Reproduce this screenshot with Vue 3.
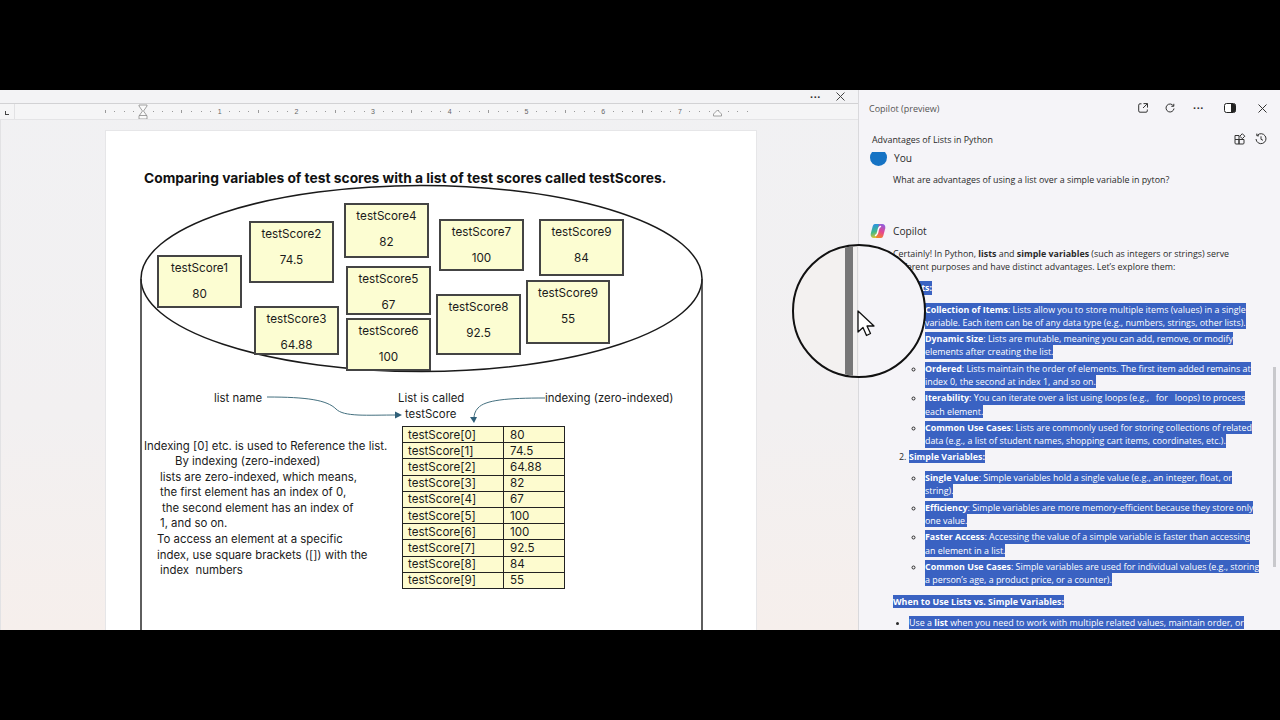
<template>
  <div class="screen">
    <div class="letterbox"></div>
    <main class="window">
      <section class="word">
        <div class="word-top">
          <span class="dots">···</span>
          <svg class="word-close" width="9" height="9" viewBox="0 0 9 9"><path d="M.5.5l8 8M8.500.5l-8 8" stroke="#444" fill="none"/></svg>
        </div>
        <div class="ruler">
          <div class="ruler-corner"><span class="tab-stop"></span></div>
          <svg class="ruler-svg" width="843" height="15" viewBox="0 0 843 15">
            <rect v-for="t in rulerTicks" :key="t.x" :x="t.x" :y="t.y" width="1" :height="t.h" fill="#9a9a9a"/>
            <text v-for="n in rulerNums" :key="n.label" :x="n.x" y="10" class="ruler-num">{{ n.label }}</text>
            <path d="M124 1h8v1l-3.500 5 3.500 5v3h-8v-3l3.500-5-3.500-5z" fill="#fafafa" stroke="#8a8a8a" stroke-width=".8"/>
            <path d="M124 11.500h8" stroke="#8a8a8a" stroke-width=".8"/>
            <path d="M698.500 12v-2l4-4 4 4v2z" fill="#fafafa" stroke="#8a8a8a" stroke-width=".8"/>
          </svg>
        </div>
        <div class="canvas">
          <div class="page">
            <h1 class="doc-title">Comparing variables of test scores with a list of test scores called testScores.</h1>

            <svg class="drum" width="650" height="499" viewBox="0 0 650 499">
              <ellipse cx="315.500" cy="147.500" rx="280.500" ry="93" fill="#fff" stroke="#1a1a1a" stroke-width="1.500"/>
              <path d="M35 148v351M596 148v351" stroke="#2a2a2a" stroke-width="1.500" fill="none"/>
              <path d="M161 266c40 0 60 3 69 12 8 8 30 6 62 6" stroke="#44707f" fill="none"/>
              <path d="M289 280.500l7 3.500-7 3.500z" fill="#2f5f78"/>
              <path d="M439 267c-38 0-60 2-67 10-3 3-4 7-4 10" stroke="#44707f" fill="none"/>
              <path d="M368 292l-4-6h7z" fill="#2f5f78"/>
            </svg>

            <div v-for="b in boxes" :key="b.name + b.value" class="score-box" :style="boxStyle(b)">
              <span>{{ b.name }}</span>
              <span>{{ b.value }}</span>
            </div>

            <span v-for="l in labels" :key="l.text" class="label" :style="{ left: l.x + 'px', top: l.y + 'px' }">{{ l.text }}</span>

            <div class="notes">
              <div v-for="n in notes" :key="n.text" class="note" :style="{ paddingLeft: n.x + 'px' }">{{ n.text }}</div>
            </div>

            <table class="scores">
              <tbody>
                <tr v-for="(v, i) in scores" :key="i">
                  <td class="key">testScore[{{ i }}]</td>
                  <td>{{ v }}</td>
                </tr>
              </tbody>
            </table>
          </div>
        </div>
      </section>

      <aside class="copilot">
        <header class="pane-head">
          <span class="pane-name">Copilot (preview)</span>
          <div class="pane-tools">
            <svg width="10" height="10" viewBox="0 0 10 10" fill="none" stroke="#333"><path d="M3.500.8H2A1.300 1.300 0 0 0 .7 2.100v5.800A1.300 1.300 0 0 0 2 9.200h6a1.300 1.300 0 0 0 1.300-1.300V6.500M5.500.6h4v4M9.300.8L5 5"/></svg>
            <svg class="t-refresh" width="10" height="10" viewBox="0 0 10 10" fill="none" stroke="#333"><path d="M8.500 3A4 4 0 1 0 9 5.500M8.800.8v2.500H6.300"/></svg>
            <span class="more t-more">···</span>
            <svg class="t-side" width="12" height="10" viewBox="0 0 12 10"><rect x=".5" y=".5" width="11" height="9" rx="2" fill="#fff" stroke="#222"/><path d="M7 1h3a1.500 1.500 0 0 1 1.500 1.500v5A1.500 1.500 0 0 1 10 9H7z" fill="#222"/></svg>
            <svg class="t-close" width="9" height="9" viewBox="0 0 9 9" fill="none" stroke="#333"><path d="M.5.5l8 8M8.500.5l-8 8"/></svg>
          </div>
        </header>
        <div class="topic">
          <span>Advantages of Lists in Python</span>
          <div class="topic-tools">
            <svg width="12" height="12" viewBox="0 0 12 12" fill="none" stroke="#333"><path d="M1 2.500h4v4H1zM1 6.500h4v4.500H2a1 1 0 0 1-1-1zM5 6.500h5V10a1 1 0 0 1-1 1H5z"/><path d="M8.300.7l2.500 2.500-2.500 2.500-2.500-2.500z"/></svg>
            <svg width="12" height="12" viewBox="0 0 12 12" fill="none" stroke="#333"><path d="M2.300 2.300A5 5 0 1 1 1 6M1.800.6v2.200H4M6 3.300v3l2 1"/></svg>
          </div>
        </div>
        <div class="thread">
          <div class="who you"><span class="avatar"></span><span>You</span></div>
          <p class="question">What are advantages of using a list over a simple variable in pyton?</p>
          <div class="who bot">
            <svg width="16" height="16" viewBox="0 0 16 16">
              <defs>
                <linearGradient id="cpA" x1="0.300" y1="0" x2="0.500" y2="1"><stop offset="0" stop-color="#2a8fe8"/><stop offset=".55" stop-color="#3fb98a"/><stop offset="1" stop-color="#e8c52e"/></linearGradient>
                <linearGradient id="cpB" x1="0.700" y1="0" x2="0.400" y2="1"><stop offset="0" stop-color="#8d5fe0"/><stop offset=".55" stop-color="#e6468f"/><stop offset="1" stop-color="#f4822c"/></linearGradient>
              </defs>
              <path d="M5 1h5L7 15H4C1.500 15 .2 13 .8 10.500L2.500 4C3 2.300 3.700 1 5 1z" fill="url(#cpA)"/>
              <path d="M11 15H6L9 1h3c2.500 0 3.800 2 3.200 4.500L13.500 12c-.5 1.700-1.200 3-2.500 3z" fill="url(#cpB)"/>
              <path d="M10.500 3.500C8.500 4 8.300 6.500 8 8c-.3 1.500-.6 3.800-2.500 4.500" stroke="#fff" stroke-width="1.400" fill="none" stroke-linecap="round"/>
            </svg>
            <span>Copilot</span>
          </div>
          <p class="intro">Certainly! In Python, <b>lists</b> and <b>simple variables</b> (such as integers or strings) serve<br>different purposes and have distinct advantages. Let’s explore them:</p>

          <div class="heading-sel first"><span class="num">1.</span><span class="sel"><b>Lists:</b></span></div>
          <ul class="sub">
            <li v-for="item in listItems" :key="item.lead">
              <div class="sel line"><b>{{ item.lead }}</b>{{ item.lines[0] }}</div>
              <div class="sel line">{{ item.lines[1] }}</div>
            </li>
          </ul>
          <div class="heading-sel second"><span class="num">2.</span><span class="sel"><b>Simple Variables:</b></span></div>
          <ul class="sub">
            <li v-for="item in varItems" :key="item.lead">
              <div class="sel line"><b>{{ item.lead }}</b>{{ item.lines[0] }}</div>
              <div class="sel line">{{ item.lines[1] }}</div>
            </li>
          </ul>
          <div class="when"><span class="sel"><b>When to Use Lists vs. Simple Variables:</b></span></div>
          <ul class="use">
            <li><span class="sel">Use a <b>list</b> when you need to work with multiple related values, maintain order, or</span></li>
          </ul>
        </div>
        <div class="scrollbar"></div>
      </aside>

      <div class="lens">
        <span class="lens-bar"></span>
        <span class="lens-edge"></span>
        <svg class="cursor" width="20" height="28" viewBox="0 0 20 28"><path d="M1 1l0 21 5-4.500 3.500 8 4-2-3.500-7.500h7z" fill="#fff" stroke="#111" stroke-width="1.300" stroke-linejoin="round"/></svg>
      </div>
    </main>
    <div class="letterbox"></div>
  </div>
</template>

<script setup>
// ruler: 76.7px per inch, zero sits at x=128 in the svg
const inch = 76.7
const rulerTicks = []
for (let i = -4; i <= 63; i++) {
  if (i % 8 === 0) continue
  const half = i % 4 === 0
  rulerTicks.push({ x: Math.round(128 + (i * inch) / 8), y: half ? 6 : 7, h: half ? 3 : 1 })
}
const rulerNums = [1, 2, 3, 4, 5, 6, 7].map((n) => ({ label: n, x: 126 + n * inch }))

const boxes = [
  { name: 'testScore1', value: 80, x: 157, y: 255, w: 85, h: 53 },
  { name: 'testScore2', value: 74.5, x: 249, y: 221, w: 85, h: 62 },
  { name: 'testScore3', value: 64.88, x: 254, y: 306, w: 85, h: 49 },
  { name: 'testScore4', value: 82, x: 344, y: 203, w: 85, h: 55 },
  { name: 'testScore5', value: 67, x: 346, y: 266, w: 85, h: 49 },
  { name: 'testScore6', value: 100, x: 346, y: 318, w: 85, h: 53 },
  { name: 'testScore7', value: 100, x: 439, y: 219, w: 85, h: 52 },
  { name: 'testScore9', value: 84, x: 539, y: 219, w: 85, h: 57 },
  { name: 'testScore8', value: 92.5, x: 436, y: 294, w: 85, h: 61 },
  { name: 'testScore9', value: 55, x: 526, y: 280, w: 84, h: 64 },
]
const boxStyle = (b) => ({
  left: b.x - 106 + 'px',
  top: b.y - 131 + 'px',
  width: b.w + 'px',
  height: b.h + 'px',
})

const labels = [
  { text: 'list name', x: 108, y: 259 },
  { text: 'List is called', x: 292, y: 259 },
  { text: 'testScore', x: 299, y: 275 },
  { text: 'indexing (zero-indexed)', x: 439, y: 259 },
]

const notes = [
  { text: 'Indexing [0] etc. is used to Reference the list.', x: 0 },
  { text: 'By indexing (zero-indexed)', x: 31 },
  { text: 'lists are zero-indexed, which means,', x: 16 },
  { text: 'the first element has an index of 0,', x: 16 },
  { text: 'the second element has an index of', x: 18 },
  { text: '1, and so on.', x: 16 },
  { text: 'To access an element at a specific', x: 13 },
  { text: 'index, use square brackets ([]) with the', x: 13 },
  { text: 'index  numbers', x: 16 },
]

const scores = [80, 74.5, 64.88, 82, 67, 100, 100, 92.5, 84, 55]

const listItems = [
  { lead: 'Collection of Items', lines: [': Lists allow you to store multiple items (values) in a single', 'variable. Each item can be of any data type (e.g., numbers, strings, other lists).'] },
  { lead: 'Dynamic Size', lines: [': Lists are mutable, meaning you can add, remove, or modify', 'elements after creating the list.'] },
  { lead: 'Ordered', lines: [': Lists maintain the order of elements. The first item added remains at', 'index 0, the second at index 1, and so on.'] },
  { lead: 'Iterability', lines: [': You can iterate over a list using loops (e.g.,   for   loops) to process', 'each element.'] },
  { lead: 'Common Use Cases', lines: [': Lists are commonly used for storing collections of related', 'data (e.g., a list of student names, shopping cart items, coordinates, etc.).'] },
]
const varItems = [
  { lead: 'Single Value', lines: [': Simple variables hold a single value (e.g., an integer, float, or', 'string).'] },
  { lead: 'Efficiency', lines: [': Simple variables are more memory-efficient because they store only', 'one value.'] },
  { lead: 'Faster Access', lines: [': Accessing the value of a simple variable is faster than accessing', 'an element in a list.'] },
  { lead: 'Common Use Cases', lines: [': Simple variables are used for individual values (e.g., storing', 'a person’s age, a product price, or a counter).'] },
]
</script>

<style>
html, body { margin: 0; background: #000; }
</style>

<style scoped>
.screen {
  width: 1280px;
  height: 720px;
  background: #000;
  display: flex;
  flex-direction: column;
  overflow: hidden;
}
.letterbox { height: 90px; flex: none; background: #000; }
.window {
  position: relative;
  height: 540px;
  flex: none;
  display: flex;
  overflow: hidden;
}

/* word side */
.word {
  width: 859px;
  flex: none;
  display: flex;
  flex-direction: column;
  background: linear-gradient(180deg, #f1f1f3 0%, #f2f0f1 60%, #f6efec 100%);
  border-right: 1px solid #d9d9dc;
  box-sizing: border-box;
}
.word-top {
  height: 14px;
  flex: none;
  box-sizing: border-box;
  background: #f3f3f5;
  border-bottom: 1px solid #d2d2d4;
  display: flex;
  align-items: center;
  justify-content: flex-end;
  gap: 15px;
  padding-right: 13px;
}
.dots { font: bold 11px "Liberation Sans", sans-serif; color: #333; }
.ruler {
  height: 16px;
  flex: none;
  box-sizing: border-box;
  display: flex;
  background: #f5f5f6;
  border-bottom: 1px solid #e4e4e6;
}
.ruler-corner {
  width: 15px;
  flex: none;
  border-right: 1px solid #e2e2e4;
  position: relative;
  box-sizing: border-box;
}
.tab-stop {
  position: absolute;
  left: 5px;
  top: 7px;
  width: 3px;
  height: 3px;
  border-left: 1px solid #444;
  border-bottom: 1px solid #444;
}
.ruler-num { font: 7px "Liberation Sans", sans-serif; fill: #666; }
.canvas {
  flex: 1;
  min-height: 0;
  overflow: hidden;
  padding: 11px 0 0 106px;
  box-shadow: inset 15px 0 0 -14px #e2e2e4;
}
.page {
  position: relative;
  width: 650px;
  height: 600px;
  background: #fff;
  box-shadow: 0 0 0 1px #e6e6e8;
  font-family: Inter, "Liberation Sans", sans-serif;
  color: #1b1b1b;
}
.doc-title {
  position: absolute;
  left: 38px;
  top: 39px;
  margin: 0;
  font-size: 13.800px;
  line-height: 17px;
  font-weight: 700;
  white-space: nowrap;
  color: #111;
}
.drum { position: absolute; left: 0; top: 0; }
.score-box {
  position: absolute;
  box-sizing: border-box;
  background: #fcfdd2;
  border: 2px solid #444;
  display: flex;
  flex-direction: column;
  align-items: center;
  gap: 13px;
  padding-top: 4.500px;
  font-size: 11.700px;
  line-height: 13px;
}
.label {
  position: absolute;
  font-size: 11.400px;
  line-height: 16px;
  white-space: nowrap;
}
.notes {
  position: absolute;
  left: 38px;
  top: 307.500px;
  font-size: 11.400px;
  line-height: 15.600px;
  white-space: pre;
}
.scores {
  position: absolute;
  left: 296px;
  top: 295px;
  width: 163px;
  height: 162px;
  border-collapse: collapse;
  background: #fdfbcf;
  font-size: 11.600px;
  line-height: 14px;
}
.scores td {
  border: 1px solid #222;
  padding: 0 0 0 6px;
  height: 16.200px;
  box-sizing: border-box;
}
.scores .key { width: 101px; padding-left: 5px; }

/* copilot side */
.copilot {
  position: relative;
  flex: 1;
  min-width: 0;
  display: flex;
  flex-direction: column;
  background: #f5f4f8;
  font-family: "Open Sans", "Liberation Sans", sans-serif;
  color: #2a2a2a;
}
.pane-head {
  height: 36px;
  flex: none;
  display: flex;
  align-items: center;
  justify-content: space-between;
  padding: 0 13.500px 0 10px;
  font-size: 9px;
  color: #555;
}
.pane-tools { display: flex; align-items: center; }
.t-refresh { margin-left: 17px; }
.t-more { margin-left: 18.500px; width: 10px; text-align: center; }
.t-side { margin-left: 21px; }
.t-close { margin-left: 21.500px; }
.more { font: bold 11px "Liberation Sans", sans-serif; color: #333; }
.topic {
  height: 26px;
  flex: none;
  display: flex;
  align-items: center;
  justify-content: space-between;
  padding: 0 13px;
  font-size: 8.900px;
}
.topic-tools { display: flex; gap: 9px; }
.thread {
  flex: 1;
  min-height: 0;
  overflow: hidden;
  font-size: 8.900px;
  line-height: 13.300px;
}
.who {
  display: flex;
  align-items: center;
  gap: 7px;
  padding-left: 11px;
  font-size: 10.200px;
  height: 13px;
}
.you .avatar { margin-top: -2px; }
.avatar {
  width: 17px;
  height: 17px;
  flex: none;
  border-radius: 50%;
  background: #1673c4;
}
.question { margin: 8.400px 0 0 34px; }
.bot { margin-top: 38px; }
.intro { margin: 9px 0 0 34px; }
.heading-sel { margin: 8px 0 0 50px; display: flex; }
.heading-sel.second { margin-top: 2.200px; }
.sub { list-style: circle; margin: 8px 0 0; padding: 0 0 0 66px; }
.sub li { margin-bottom: 3px; }
.sub li:last-child { margin-bottom: 0; }
.sub li::marker { font-size: 9px; }
.sel {
  background: #3a62c2;
  color: #fff;
}
.line { width: fit-content; white-space: pre; }
.num { position: absolute; left: 40px; }
.when { margin: 9px 0 0 34px; }
.use { list-style: disc; margin: 7px 0 0; padding: 0 0 0 50px; }
.scrollbar {
  position: absolute;
  right: 4px;
  top: 277px;
  width: 3px;
  height: 200px;
  background: #c8c8cc;
}

/* magnifier over the pane border */
.lens {
  position: absolute;
  left: 792px;
  top: 154px;
  width: 134px;
  height: 134px;
  box-sizing: border-box;
  border: 2px solid #111;
  border-radius: 50%;
  overflow: hidden;
  background: linear-gradient(90deg, #f3f1f0 0 50%, #f5f4f8 50% 100%);
}
.lens-bar {
  position: absolute;
  left: 51px;
  top: 0;
  bottom: 0;
  width: 8px;
  background: #777;
}
.lens-edge {
  position: absolute;
  left: 63px;
  top: 0;
  bottom: 0;
  width: 1px;
  background: #d9d9dc;
}
.cursor { position: absolute; left: 63px; top: 64px; }
</style>
